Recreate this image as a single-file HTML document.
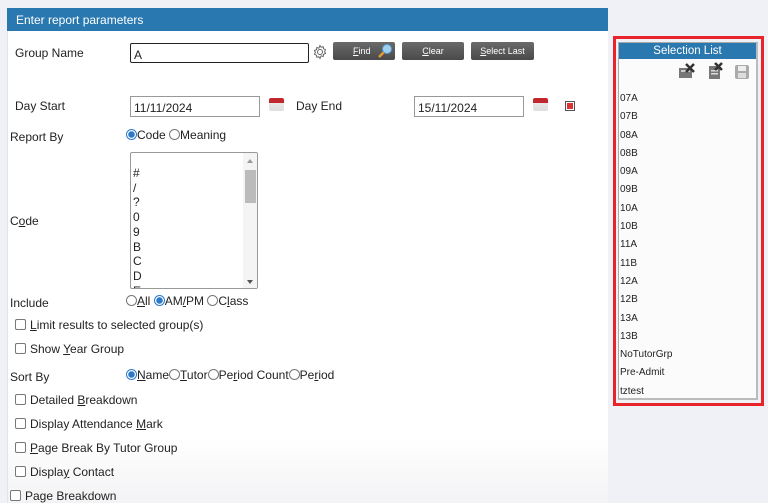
<!DOCTYPE html>
<html><head><style>
*{margin:0;padding:0;box-sizing:border-box}
body{width:768px;height:503px;background:#f0f1f6;font-family:"Liberation Sans",Arial,sans-serif;color:#222;position:relative;overflow:hidden;font-size:11px}
.a{position:absolute;white-space:nowrap}
#panel{position:absolute;left:7px;top:8px;width:601px;height:495px;background:linear-gradient(#fff 0,#fff 430px,#f3f3f5 495px);border-left:1px solid #e2e4ea}
#hdr{position:absolute;left:7px;top:8px;width:601px;height:23px;background:#2a78b0;color:#fff;font-size:12px;padding:5px 0 0 9px}
.lbl{font-size:12px}
.inp{position:absolute;background:#fff;border:1px solid #999;font-size:12px;padding:4px 0 0 3px}
.btn{position:absolute;height:18px;background:linear-gradient(#6a6a6a,#4a4a4a);border-radius:2px;color:#fff;font-size:9px;text-align:center;padding-top:4px}
.cal{position:absolute;width:15px;height:13px;border-radius:2px;background:linear-gradient(#c0282d 0,#c0282d 5px,#e8e8e8 5px,#ddd 13px)}
.rad{display:inline-block;width:11px;height:11px;border:1px solid #777;border-radius:50%;vertical-align:-1px;background:#fff}
.rad.on{border-color:#2a78c8;background:radial-gradient(#2a78c8 0 3px,#fff 3.5px)}
.cb{display:inline-block;width:11px;height:11px;border:1px solid #777;border-radius:2px;vertical-align:-1px;margin-right:4px;background:#fff}
u{text-decoration:underline}
</style></head><body>
<div id="panel"></div>
<div id="hdr">Enter report parameters</div>

<div class="a lbl" style="left:15px;top:46px">Group Name</div>
<div class="inp" style="left:130px;top:43px;width:179px;height:20px;border:1px solid #222;border-radius:2px">A</div>
<svg class="a" style="left:312px;top:44px" width="16" height="16" viewBox="0 0 16 16"><circle cx="8" cy="8" r="2.5" fill="none" stroke="#666" stroke-width="1"/><path d="M8 1.5l1.2 1.8 2-.6.3 2.1 2 .9-.9 1.9.9 1.9-2 .9-.3 2.1-2-.6L8 14.5l-1.2-1.8-2 .6-.3-2.1-2-.9.9-1.9-.9-1.9 2-.9.3-2.1 2 .6z" fill="none" stroke="#666" stroke-width="1"/></svg>
<div class="btn" style="left:333px;top:42px;width:62px;text-align:left;padding-left:20px"><u>F</u>ind<svg style="position:absolute;left:44px;top:1px" width="16" height="16" viewBox="0 0 16 16"><line x1="2" y1="14" x2="7" y2="9" stroke="#e89a30" stroke-width="2.5"/><circle cx="10" cy="6" r="4.5" fill="#9fd0f0" stroke="#5a9ad0"/></svg></div>
<div class="btn" style="left:402px;top:42px;width:62px"><u>C</u>lear</div>
<div class="btn" style="left:471px;top:42px;width:63px"><u>S</u>elect Last</div>

<div class="a lbl" style="left:15px;top:99px">Day Start</div>
<div class="inp" style="left:130px;top:96px;width:130px;height:21px">11/11/2024</div>
<div class="cal" style="left:269px;top:98px"></div>
<div class="a lbl" style="left:296px;top:99px">Day End</div>
<div class="inp" style="left:414px;top:96px;width:110px;height:21px">15/11/2024</div>
<div class="cal" style="left:533px;top:98px"></div>
<div class="a" style="left:565px;top:101px;width:10px;height:10px;border:1px solid #555;background:#fff"><div style="margin:1px;width:6px;height:6px;background:#d33"></div></div>

<div class="a lbl" style="left:10px;top:130px">Report By</div>
<div class="a lbl" style="left:126px;top:128px"><span class="rad on"></span>Code <span class="rad"></span>Meaning</div>

<div class="a" style="left:130px;top:152px;width:128px;height:137px;border:1px solid #999;border-radius:2px;background:#fff;overflow:hidden">
<div style="position:absolute;left:2px;top:13px;font-size:12px;line-height:14.7px">#<br>/<br>?<br>0<br>9<br>B<br>C<br>D<br>E</div>
<div style="position:absolute;right:0;top:0;width:14px;height:135px;background:#f4f4f4"><div style="position:absolute;left:2px;top:17px;width:11px;height:33px;background:#bbb"></div><div style="position:absolute;left:4px;top:6px;border:3px solid transparent;border-bottom:4px solid #999;border-top:0"></div><div style="position:absolute;left:4px;top:127px;border:3px solid transparent;border-top:4px solid #555;border-bottom:0"></div></div>
</div>
<div class="a lbl" style="left:10px;top:214px">C<u>o</u>de</div>

<div class="a lbl" style="left:10px;top:296px">Include</div>
<div class="a lbl" style="left:126px;top:294px"><span class="rad"></span><u>A</u>ll <span class="rad on"></span>AM<u>/</u>PM <span class="rad"></span>C<u>l</u>ass</div>
<div class="a lbl" style="left:15px;top:318px"><span class="cb"></span><u>L</u>imit results to selected group(s)</div>
<div class="a lbl" style="left:15px;top:342px"><span class="cb"></span>Show <u>Y</u>ear Group</div>
<div class="a lbl" style="left:10px;top:370px">Sort By</div>
<div class="a lbl" style="left:126px;top:368px"><span class="rad on"></span><u>N</u>ame<span class="rad"></span><u>T</u>utor<span class="rad"></span>Pe<u>r</u>iod Count<span class="rad"></span>Pe<u>r</u>iod</div>
<div class="a lbl" style="left:15px;top:393px"><span class="cb"></span>Detailed <u>B</u>reakdown</div>
<div class="a lbl" style="left:15px;top:417px"><span class="cb"></span>Display Attendance <u>M</u>ark</div>
<div class="a lbl" style="left:15px;top:441px"><span class="cb"></span><u>P</u>age Break By Tutor Group</div>
<div class="a lbl" style="left:15px;top:465px"><span class="cb"></span>Displa<u>y</u> Contact</div>
<div class="a lbl" style="left:10px;top:489px"><span class="cb"></span>Page Breakdown</div>

<div class="a" style="left:613px;top:36px;width:151px;height:370px;border:3px solid #e8232a;background:#f0f1f6"></div>
<div class="a" style="left:618px;top:42px;width:140px;height:358px;border:1px solid #aaa;border-right:2px solid #bbb;border-bottom:2px solid #bbb;background:#fbfbfc"></div>
<div class="a" style="left:619px;top:43px;width:137px;height:16px;background:#2a78b0;color:#fff;font-size:11.5px;text-align:center;padding-top:2px">Selection List</div>
<svg class="a" style="left:676px;top:62px" width="76" height="20" viewBox="0 0 76 20">
<rect x="3" y="6" width="13" height="10" fill="#777"/><rect x="5" y="8" width="9" height="2" fill="#ccc"/><path d="M10 2l8 8M18 2l-8 8" stroke="#333" stroke-width="2.5"/>
<rect x="33" y="4" width="11" height="13" fill="#777"/><rect x="35" y="8" width="7" height="1.5" fill="#ddd"/><rect x="35" y="11" width="7" height="1.5" fill="#ddd"/><path d="M39 1l7 7M46 1l-7 7" stroke="#333" stroke-width="2.5"/>
<rect x="59" y="3" width="14" height="14" rx="2" fill="#aaa"/><rect x="62" y="4" width="8" height="5" fill="#eee"/><rect x="62" y="11" width="8" height="5" fill="#ddd"/>
</svg>
<div class="a" style="left:620px;top:90px;font-size:10px;line-height:18.3px">07A<br>07B<br>08A<br>08B<br>09A<br>09B<br>10A<br>10B<br>11A<br>11B<br>12A<br>12B<br>13A<br>13B<br>NoTutorGrp<br>Pre-Admit<br>tztest</div>
</body></html>
